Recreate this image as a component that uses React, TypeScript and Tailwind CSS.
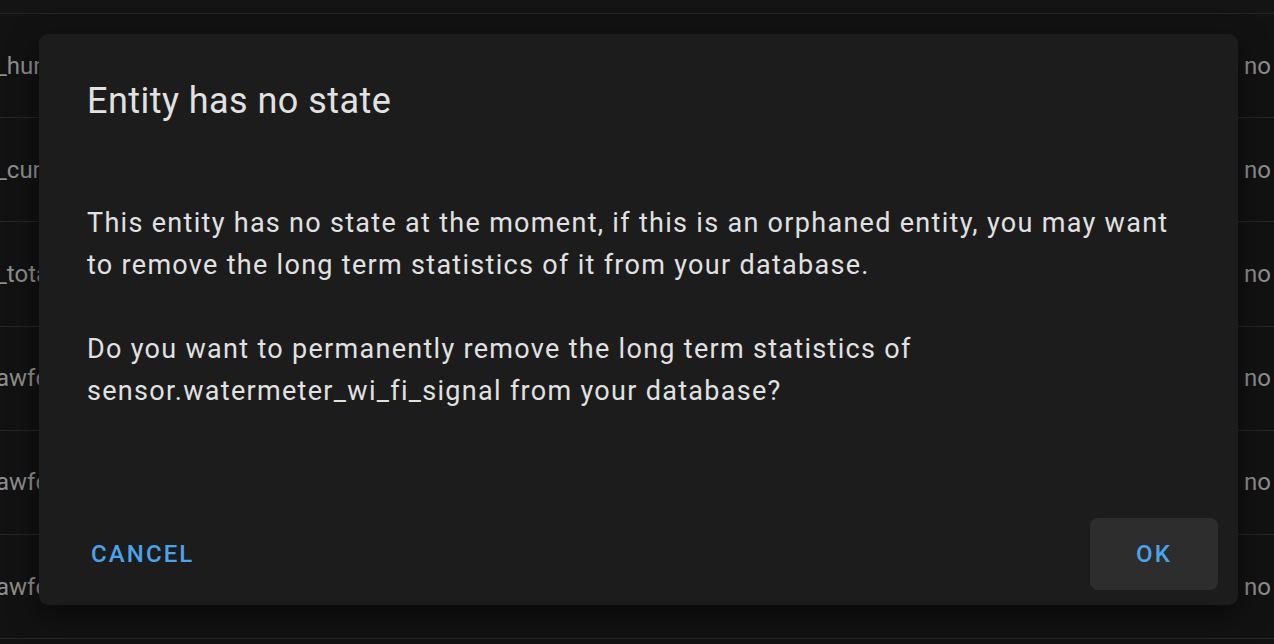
const ROWS = [
  { left: "_humidity", right: "no" },
  { left: "_current", right: "no" },
  { left: "_total", right: "no" },
  { left: "awforce", right: "no" },
  { left: "awforce", right: "no" },
  { left: "awforce", right: "no" },
];

export default function App() {
  return (
    <div
      className="relative h-[644px] w-[1274px] overflow-hidden bg-[#121212]"
      style={{ fontFamily: "Roboto, 'Noto Sans', sans-serif" }}
    >
      <div className="h-[14px] border-b border-[#262626] bg-[#141414]" />
      {ROWS.map((row, i) => (
        <div
          key={i}
          className="flex h-[104.2px] items-center justify-between border-b border-[#262626] text-[24px] text-[#8e8e8e]"
        >
          <div className="w-[120px] overflow-hidden whitespace-nowrap">
            <span className="-ml-[4px] block">{row.left}</span>
          </div>
          <span className="pr-[3px]">{row.right}</span>
        </div>
      ))}

      <div className="absolute left-[39px] top-[34px] flex h-[571px] w-[1199px] flex-col rounded-[9px] bg-[#1c1c1c] shadow-[0_10px_30px_rgba(0,0,0,0.5)]">
        <h2 className="pl-[48px] pt-[43px] text-[36px] font-normal leading-[48px] tracking-[0.45px] text-[#e1e1e1]">
          Entity has no state
        </h2>
        <div className="mt-[77px] pl-[48px] pr-[50px] text-[27px] leading-[42px] tracking-[1.3px] text-[#e1e1e1]">
          <p>
            This entity has no state at the moment, if this is an orphaned entity, you may want
            to remove the long term statistics of it from your database.
          </p>
          <p className="mt-[42px]">
            Do you want to permanently remove the long term statistics of
            <br />
            sensor.watermeter_wi_fi_signal from your database?
          </p>
        </div>
        <div className="mt-auto flex items-center justify-between pb-[15px] pl-[38px] pr-[20px]">
          <button className="flex h-[72px] items-center rounded-[8px] px-[14px] text-[24px] font-medium tracking-[2.1px] text-[#4ba3e8]">
            CANCEL
          </button>
          <button className="flex h-[72px] w-[128px] items-center justify-center rounded-[8px] bg-[#2d2d2d] text-[24px] font-medium tracking-[2.1px] text-[#4ba3e8]">
            OK
          </button>
        </div>
      </div>
    </div>
  );
}
